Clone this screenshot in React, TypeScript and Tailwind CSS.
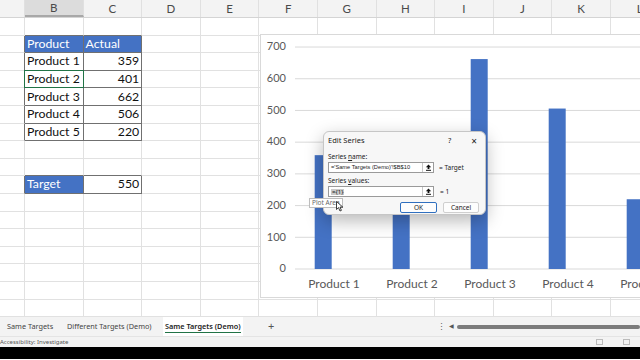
import React from "react";

const COLS = ["A", "B", "C", "D", "E", "F", "G", "H", "I", "J", "K", "L"];
const ROW_COUNT = 17;

const products = [
  { name: "Product 1", value: 359 },
  { name: "Product 2", value: 401 },
  { name: "Product 3", value: 662 },
  { name: "Product 4", value: 506 },
  { name: "Product 5", value: 220 },
];

// what sits in each cell of columns B and C
const cellContent = (r: number, c: number) => {
  if (r === 1) {
    if (c === 1) return { text: "Product", kind: "head" };
    if (c === 2) return { text: "Actual", kind: "head" };
  }
  if (r >= 2 && r <= 6) {
    const p = products[r - 2];
    if (c === 1) return { text: p.name, kind: "text" };
    if (c === 2) return { text: String(p.value), kind: "num" };
  }
  if (r === 9) {
    if (c === 1) return { text: "Target", kind: "head" };
    if (c === 2) return { text: "550", kind: "num" };
  }
  return null;
};

const inTable = (r: number, c: number) =>
  (c === 1 || c === 2) && ((r >= 1 && r <= 6) || r === 9);

const Cell = ({ r, c }: { r: number; c: number }) => {
  const content = cellContent(r, c);
  const w = c === 0 ? "w-[25px]" : "w-[58.6px]";
  // dark edge when this cell or its neighbour belongs to the table
  const rightDark = inTable(r, c) || inTable(r, c + 1);
  const bottomDark = inTable(r, c) || inTable(r + 1, c);
  const isHead = content?.kind === "head";
  const selected = r === 3 && c === 1;
  return (
    <div
      className={`${w} h-full shrink-0 relative flex items-center px-[2px] border-r border-b ${
        rightDark ? "border-r-[#707070]" : "border-r-[#e1e1e1]"
      } ${bottomDark ? "border-b-[#707070]" : "border-b-[#e1e1e1]"} ${
        isHead ? "bg-[#4472c4] text-white" : "bg-white text-[#111]"
      } ${content?.kind === "num" ? "justify-end" : "justify-start"}`}
    >
      <span className="text-[12.3px] leading-none whitespace-nowrap">{content?.text}</span>
      {selected && (
        <div className="absolute -left-px -top-px -right-px -bottom-px border-[1.5px] border-[#217346]" />
      )}
    </div>
  );
};

const UploadIcon = () => (
  <svg width="7" height="7" viewBox="0 0 7 7">
    <path d="M3.5 0.5 L6.2 3.3 L4.4 3.3 L4.4 5 L2.6 5 L2.6 3.3 L0.8 3.3 Z" fill="#111" />
    <rect x="1" y="5.8" width="5" height="1" fill="#111" />
  </svg>
);

const Chart = () => {
  const scale = 0.3171;
  const base = 234;
  const ticks = [0, 100, 200, 300, 400, 500, 600, 700];
  return (
    <div className="absolute left-[260px] top-[34px] w-[400px] h-[264px] bg-white border border-[#d9d9d9]">
      <svg width="400" height="264" className="block">
        {ticks.map((t) => (
          <g key={t}>
            <line x1="34" x2="400" y1={base - t * scale} y2={base - t * scale} stroke="#d9d9d9" strokeWidth="1" />
            <text
              x="25"
              y={base - t * scale + 0.5}
              textAnchor="end"
              dominantBaseline="middle"
              fontSize="11"
              fill="#595959"
              fontFamily="Lato, sans-serif"
            >
              {t}
            </text>
          </g>
        ))}
        {products.map((p, i) => (
          <g key={p.name}>
            <rect x={53.7 + 78 * i} y={base - p.value * scale} width="17" height={p.value * scale} fill="#4472c4" />
            <text
              x={73 + 78 * i}
              y="250"
              textAnchor="middle"
              dominantBaseline="middle"
              fontSize="12"
              fill="#595959"
              fontFamily="Lato, sans-serif"
            >
              {p.name}
            </text>
          </g>
        ))}
      </svg>
    </div>
  );
};

const EditSeries = () => (
  <div className="absolute left-[323px] top-[131px] w-[163px] h-[84px] rounded-[6px] bg-[#f7f7f7] border border-[#c6c6c6] shadow-[0_6px_18px_rgba(0,0,0,0.28)] px-[4px] pt-[4px] text-[#1b1b1b] font-['Noto_Sans',sans-serif]">
    <div className="h-[10px] flex items-center justify-between">
      <span className="text-[7.5px]">Edit Series</span>
      <div className="flex items-center gap-[20px] pr-[4px]">
        <span className="text-[7.5px]">?</span>
        <span className="text-[10px] leading-none">×</span>
      </div>
    </div>
    <div className="mt-[7px] h-[8px] flex items-center text-[6.5px]">
      <span>
        Series <span className="underline">n</span>ame:
      </span>
    </div>
    <div className="mt-[1px] flex items-center gap-[5px]">
      <div className="w-[106px] h-[11px] bg-white border border-[#9a9a9a] flex items-center">
        <span className="flex-1 px-[2px] text-[5.7px] leading-none whitespace-nowrap overflow-hidden font-['Liberation_Sans',sans-serif]">
          ='Same Targets (Demo)'!$B$10
        </span>
        <div className="w-[11px] h-full border-l border-[#c8c8c8] flex items-center justify-center">
          <UploadIcon />
        </div>
      </div>
      <span className="text-[6.5px]">= Target</span>
    </div>
    <div className="mt-[4px] h-[8px] flex items-center text-[6.5px]">
      <span>
        Series <span className="underline">v</span>alues:
      </span>
    </div>
    <div className="mt-[1px] flex items-center gap-[5px]">
      <div className="w-[106px] h-[11px] bg-white border border-[#9a9a9a] flex items-center">
        <div className="flex-1 px-[2px] flex items-center">
          <span className="text-[6px] leading-none bg-[#c9c9c9] px-[1px]">={"{1}"}</span>
        </div>
        <div className="w-[11px] h-full border-l border-[#c8c8c8] flex items-center justify-center">
          <UploadIcon />
        </div>
      </div>
      <span className="text-[6.5px] pl-[1px]">= 1</span>
    </div>
    <div className="mt-[5px] flex justify-end gap-[6px] pr-[2px]">
      <div className="w-[37px] h-[11px] rounded-[2px] bg-[#fdfdfd] border border-[#2f6fbf] flex items-center justify-center text-[6.5px]">
        OK
      </div>
      <div className="w-[36px] h-[11px] rounded-[2px] bg-[#fdfdfd] border border-[#cfcfcf] flex items-center justify-center text-[6.5px]">
        Cancel
      </div>
    </div>
  </div>
);

const App = () => {
  return (
    <div className="w-[640px] h-[360px] relative overflow-hidden bg-white font-['Lato',sans-serif]">
      {/* column headers */}
      <div className="h-[18px] flex bg-[#f3f3f3] border-b border-[#d4d4d4]">
        {COLS.map((c, i) => (
          <div
            key={c}
            className={`${i === 0 ? "w-[25px]" : "w-[58.6px]"} shrink-0 h-full flex items-center justify-center text-[11.5px] text-[#4a4a4a] border-r border-[#e0e0e0] ${
              c === "B" ? "bg-[#dcdcdc] border-b-2 border-b-[#a8a8a8]" : ""
            }`}
          >
            {i === 0 ? "" : c}
          </div>
        ))}
      </div>

      {/* grid */}
      <div className="flex flex-col">
        {Array.from({ length: ROW_COUNT }).map((_, r) => (
          <div key={r} className="h-[17.6px] flex">
            {COLS.map((_, c) => (
              <Cell key={c} r={r} c={c} />
            ))}
          </div>
        ))}
      </div>

      {/* sheet tabs */}
      <div className="h-[19px] flex items-center bg-[#f3f3f3] text-[7.3px] text-[#444] font-['Noto_Sans',sans-serif]">
        <div className="w-[67px] shrink-0 pl-[7px]">Same Targets</div>
        <div className="w-[96px] shrink-0">Different Targets (Demo)</div>
        <div className="w-[80px] shrink-0 h-full flex flex-col justify-center items-start bg-white pl-[2px]">
          <span className="font-semibold text-[#222] border-b-[1.5px] border-[#217346] leading-[11px]">
            Same Targets (Demo)
          </span>
        </div>
        <div className="w-[194px] shrink-0 pl-[25px] text-[11px] text-[#555]">+</div>
        <div className="w-[12px] shrink-0 text-[9px] text-[#666]">⋮</div>
        <div className="w-[8px] shrink-0 text-[6px] text-[#555]">◀</div>
        <div className="flex-1 h-[4px] rounded-full bg-[#7c7c7c]" />
      </div>

      {/* status bar */}
      <div className="h-[11px] flex items-center bg-[#f3f3f3] border-t border-[#e4e4e4] font-['Noto_Sans',sans-serif]">
        <span className="text-[6px] text-[#555] leading-none">Accessibility: Investigate</span>
        <div className="ml-auto flex items-center gap-[20px] pr-[10px]">
          <div className="w-[7px] h-[6px] border border-[#bbb]" />
          <div className="w-[7px] h-[6px] border border-[#bbb]" />
        </div>
      </div>

      <div className="h-[12px] bg-black" />

      <Chart />
      <EditSeries />

      {/* chart tooltip */}
      <div className="absolute left-[309px] top-[198px] h-[10px] px-[2px] bg-white border border-[#bdbdbd] flex items-center text-[6.5px] text-[#666] font-['Noto_Sans',sans-serif]">
        Plot Area
      </div>
      <svg className="absolute left-[336px] top-[201px]" width="8" height="11" viewBox="0 0 8 11">
        <path d="M0.5 0.5 L0.5 8.5 L2.5 6.6 L4 10 L5.4 9.4 L4 6.1 L6.8 6.1 Z" fill="#fff" stroke="#111" strokeWidth="0.8" />
      </svg>
    </div>
  );
};

export default App;
